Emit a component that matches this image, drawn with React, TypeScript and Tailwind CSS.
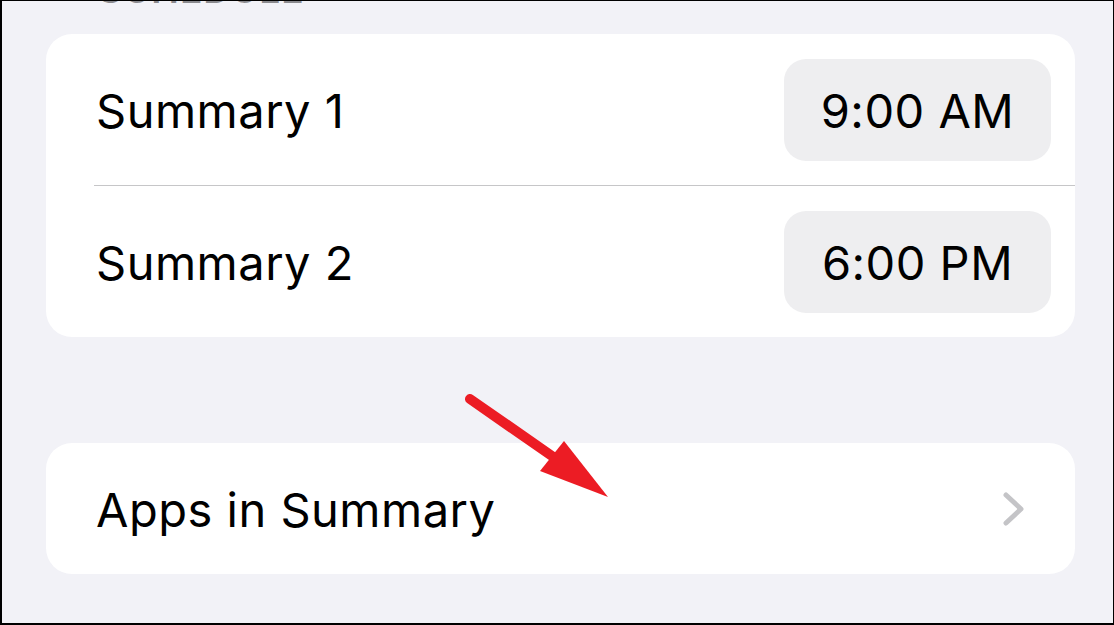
export default function App() {
  const font = { fontFamily: 'Inter, "Noto Sans", sans-serif' };
  return (
    <div
      className="relative w-[1114px] h-[625px] overflow-hidden bg-[#f2f2f7] border-t border-r border-l-2 border-b-2 border-black text-black"
      style={font}
    >
      {/* section header, scrolled mostly out of view */}
      <div className="h-[33px] overflow-hidden pl-[96px]">
        <div className="-mt-[27px] text-[37px] leading-[31px] font-semibold tracking-[1px] text-[#8a8a8e]">SCHEDULE</div>
      </div>

      {/* schedule card */}
      <div className="ml-[44px] mr-[38px] bg-white rounded-[26px] overflow-hidden">
        <div className="h-[151px] flex items-center justify-between pl-[50px] pr-[24px]">
          <span className="pt-[4px] text-[47px] tracking-[0.5px]">Summary 1</span>
          <div className="h-[102px] w-[267px] rounded-[22px] bg-[#eeeef0] flex items-center justify-center pt-[4px] text-[47px] tracking-[0.5px]">
            9:00 AM
          </div>
        </div>
        <div className="ml-[48px] h-px bg-[#c6c6c8]" />
        <div className="h-[151px] flex items-center justify-between pl-[50px] pr-[24px]">
          <span className="pt-[4px] text-[47px] tracking-[0.5px]">Summary 2</span>
          <div className="h-[102px] w-[267px] rounded-[22px] bg-[#eeeef0] flex items-center justify-center pt-[4px] text-[47px] tracking-[0.5px]">
            6:00 PM
          </div>
        </div>
      </div>

      {/* apps card */}
      <div className="mt-[106px] ml-[44px] mr-[38px] h-[131px] bg-white rounded-[26px] flex items-center justify-between pl-[50px] pr-[48px]">
        <span className="pt-[4px] text-[47px] tracking-[0.5px]">Apps in Summary</span>
        <svg width="26" height="38" viewBox="0 0 26 38" fill="none">
          <path d="M5 5 L20 19 L5 33" stroke="#c4c4c7" strokeWidth="5" strokeLinecap="round" strokeLinejoin="round" />
        </svg>
      </div>

      {/* red callout arrow */}
      <svg className="absolute left-0 top-0 pointer-events-none" width="1114" height="625" viewBox="0 0 1114 625">
        <line x1="468" y1="398" x2="560" y2="462" stroke="#ec1c24" strokeWidth="10" strokeLinecap="round" />
        <polygon points="606,496 538,470 562,440" fill="#ec1c24" />
      </svg>
    </div>
  );
}
